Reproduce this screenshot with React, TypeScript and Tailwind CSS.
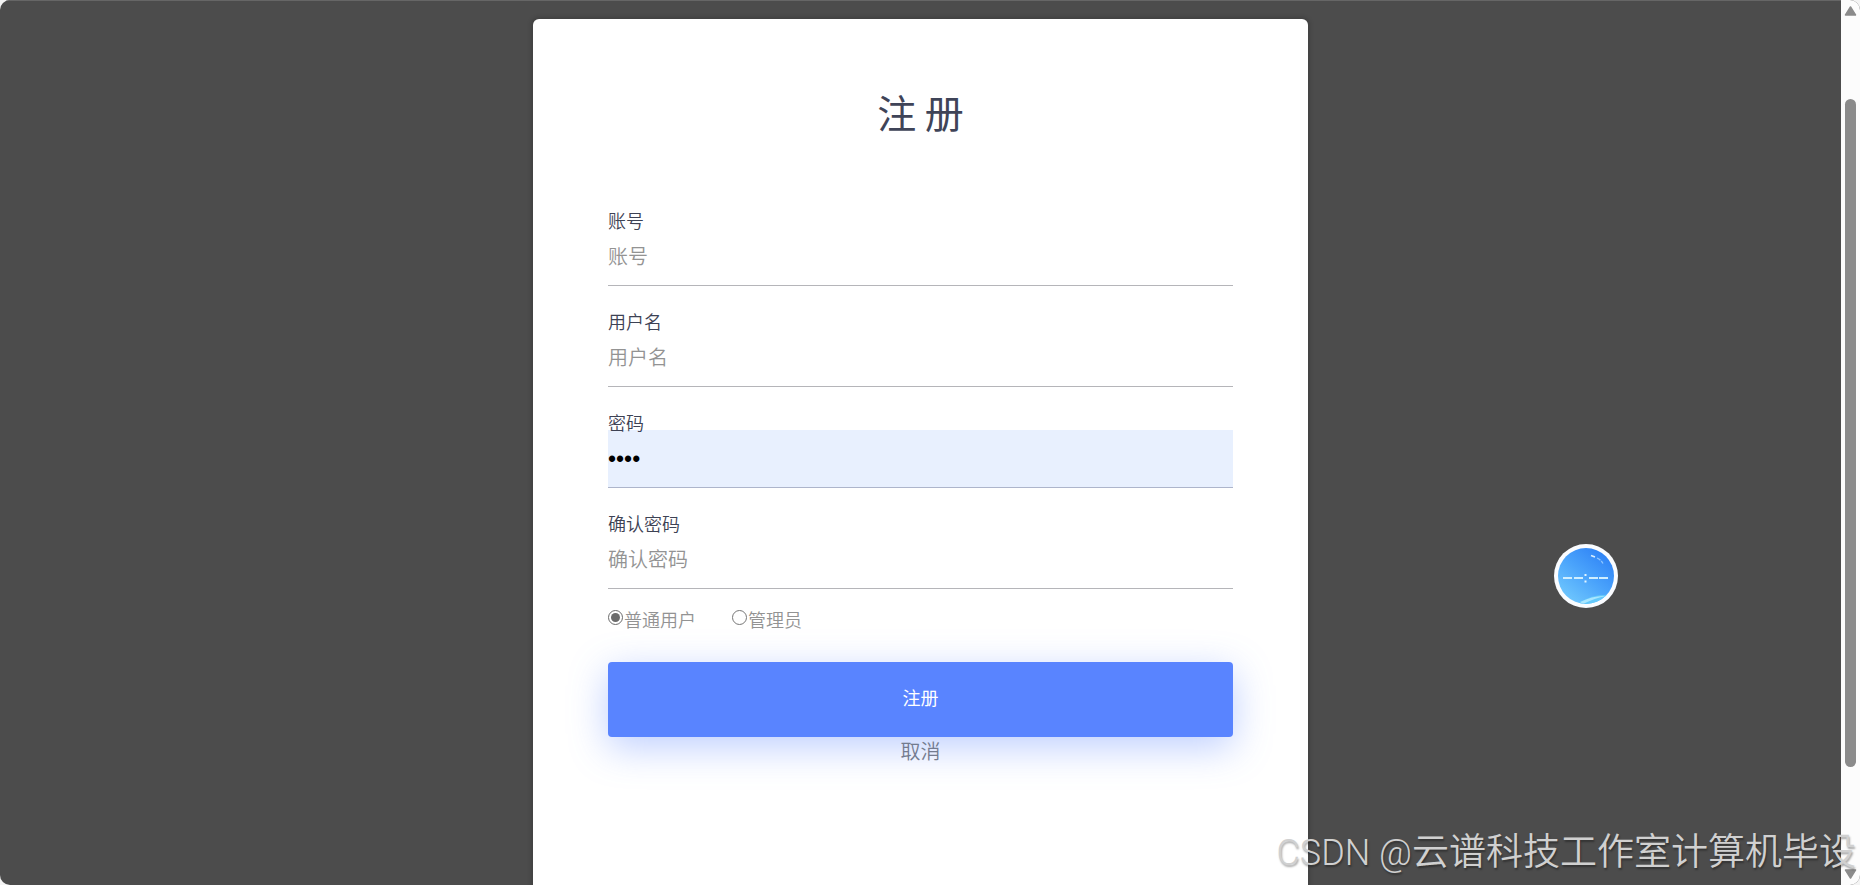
import { useState } from "react";

type FieldProps = {
  id: string;
  label: string;
  type?: string;
  placeholder?: string;
  initial?: string;
  filled?: boolean;
};

function Field({ id, label, type = "text", placeholder, initial = "", filled = false }: FieldProps) {
  const [value, setValue] = useState(initial);
  return (
    <div className="flex flex-col">
      <label htmlFor={id} className="relative z-10 self-start text-[18px] leading-[12px] text-[#3d4254]">
        {label}
      </label>
      <input
        id={id}
        type={type}
        value={value}
        placeholder={placeholder}
        onChange={(e) => setValue(e.target.value)}
        className={
          filled
            ? "mt-[2px] h-[58px] w-full rounded-none border-b border-[#adb5cb] bg-[#e8f0fe] pt-[2px] font-['Liberation_Sans',sans-serif] text-[23px] text-black outline-none"
            : "mt-[2px] h-[58px] w-full rounded-none border-b border-[#b5b5b9] bg-transparent pb-[2px] text-[20px] text-[#43485a] outline-none placeholder:text-[#939393]"
        }
      />
    </div>
  );
}

function RoleOption({ value, label, checked, onSelect }: { value: string; label: string; checked: boolean; onSelect: () => void }) {
  return (
    <label className="flex items-center gap-px text-[18px] leading-[22px] text-[#939393]">
      <input
        type="radio"
        name="role"
        value={value}
        checked={checked}
        onChange={onSelect}
        className="mb-[4px] size-[15px] accent-[#6b6b6b]"
      />
      {label}
    </label>
  );
}

function FloatingBall() {
  return (
    <svg viewBox="0 0 66 66" className="absolute top-[543px] right-[241px] size-[66px]" aria-hidden="true">
      <defs>
        <linearGradient id="ball" x1="0.85" y1="0.1" x2="0.2" y2="0.9">
          <stop offset="0" stopColor="#2f83f6" />
          <stop offset="0.5" stopColor="#4aa3fb" />
          <stop offset="1" stopColor="#6cc4fd" />
        </linearGradient>
        <clipPath id="ballClip">
          <circle cx="33" cy="33" r="28" />
        </clipPath>
      </defs>
      <circle cx="33" cy="33" r="32" fill="#fafcff" />
      <circle cx="33" cy="33" r="28" fill="url(#ball)" />
      <g clipPath="url(#ballClip)">
        <path d="M25 60 Q41 50 60 52 V66 H25 Z" fill="#63c9fb" />
        <path d="M27 59 Q41 52 53 53 Q42 55 30 61 Z" fill="#a9e6ff" />
      </g>
      <path d="M38 12.500l4 1.500" stroke="#d9efff" strokeWidth="1.500" />
      <path d="M44 15q4 2 6 5.500" stroke="#8fc6ff" strokeWidth="1.300" strokeDasharray="4 1" fill="none" />
      <path d="M10 35h9M21 35h9M36 35h9M46 35h9" stroke="#cfeeff" strokeWidth="2" />
      <path d="M31.500 32h2M31.500 38.500h2" stroke="#e4f6ff" strokeWidth="2" />
    </svg>
  );
}

function ScrollRail() {
  return (
    <div className="flex w-[19px] shrink-0 flex-col items-center bg-[#fcfcfc] py-[5px]" aria-hidden="true">
      <svg viewBox="0 0 13 11" className="h-[11px] w-[13px]">
        <path d="M6.500 2L11.500 10H1.500Z" fill="#8b8b8b" stroke="#8b8b8b" strokeWidth="1.500" strokeLinejoin="round" />
      </svg>
      <div className="flex w-full flex-1 flex-col items-center">
        <div className="basis-[83px]" />
        <div className="w-[11px] flex-1 rounded-full bg-[#8b8b8b]" />
        <div className="basis-[102px]" />
      </div>
      <svg viewBox="0 0 13 11" className="h-[11px] w-[13px]">
        <path d="M6.500 9L11.500 1H1.500Z" fill="#8b8b8b" stroke="#8b8b8b" strokeWidth="1.500" strokeLinejoin="round" />
      </svg>
    </div>
  );
}

export default function App() {
  const [role, setRole] = useState("user");
  return (
    <div className="h-screen bg-[#f4f4f4] font-['Noto_Sans_CJK_SC',sans-serif] font-[350]">
      <div className="relative flex h-full overflow-hidden rounded-[10px] bg-[#4c4c4c]">
        <main className="flex flex-1 justify-center border-t border-[#666666] pt-[18px]">
          <form
            onSubmit={(e) => e.preventDefault()}
            className="flex w-full max-w-[775px] flex-col rounded-t-[6px] bg-white px-[75px] pt-[62px] shadow-[0_0_4px_2px_rgba(0,0,0,0.16)]"
          >
            <h1 className="text-center text-[39px] leading-[60px] font-normal text-[#3f4458]">注 册</h1>
            <div className="mt-[73px] flex flex-col gap-[29px]">
              <Field id="account" label="账号" placeholder="账号" />
              <Field id="username" label="用户名" placeholder="用户名" />
              <Field id="password" label="密码" type="password" initial="1234" filled />
              <Field id="confirm" label="确认密码" type="password" placeholder="确认密码" />
            </div>
            <div className="mt-[19px] flex gap-[36px]">
              <RoleOption value="user" label="普通用户" checked={role === "user"} onSelect={() => setRole("user")} />
              <RoleOption value="admin" label="管理员" checked={role === "admin"} onSelect={() => setRole("admin")} />
            </div>
            <button
              type="submit"
              className="mt-[32px] h-[75px] w-full shrink-0 rounded-[4px] bg-[#5984ff] pb-1 text-[18px] font-normal text-white shadow-[0_10px_38px_0_rgba(89,132,255,0.4)]"
            >
              注册
            </button>
            <a href="#login" className="self-center text-[20px] leading-[28px] text-[#737b8f]">
              取消
            </a>
          </form>
        </main>
        <ScrollRail />
        <FloatingBall />
        <p className="absolute right-[4px] bottom-[8px] text-[37px] leading-[48px] font-[350] whitespace-nowrap text-[#d0d0d0] [text-shadow:1px_2px_2px_rgba(0,0,0,0.35)]">
          <span className="font-['Roboto',sans-serif] text-[36px]">CSDN @</span>云谱科技工作室计算机毕设
        </p>
      </div>
    </div>
  );
}
